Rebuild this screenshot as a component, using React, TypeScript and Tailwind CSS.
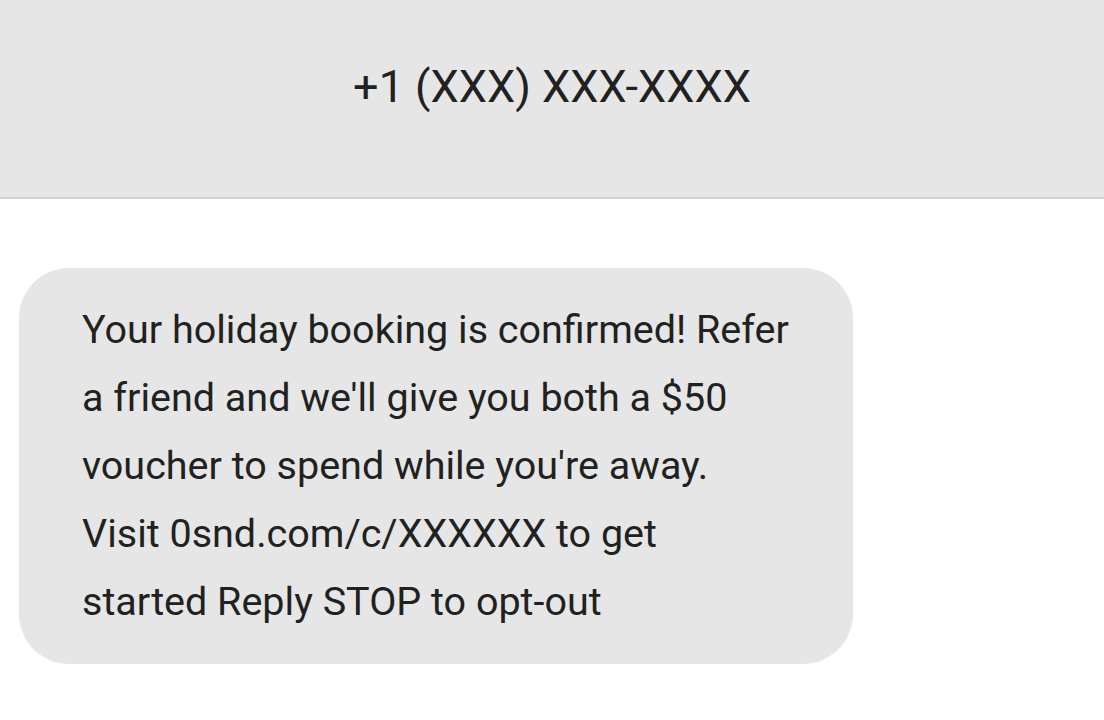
export default function App() {
  const lines = [
    "Your holiday booking is confirmed! Refer",
    "a friend and we'll give you both a $50",
    "voucher to spend while you're away.",
    "Visit 0snd.com/c/XXXXXX to get",
    "started Reply STOP to opt-out",
  ];

  return (
    <div className="w-[1104px] h-[720px] bg-white overflow-hidden font-['Roboto',sans-serif] text-[#202222]">
      {/* Шапка */}
      <div className="h-[199px] bg-[#e6e6e6] border-b-[2px] border-[#d4d4d4] flex justify-center pt-[57px]">
        <p className="text-[45px] leading-[60px]">+1 (XXX) XXX-XXXX</p>
      </div>

      {/* Сообщение */}
      <div className="pt-[69px] pl-[19px]">
        <div className="w-[834px] bg-[#e6e6e6] rounded-[50px] pl-[63px] pt-[28px] pb-[28px]">
          {lines.map((l) => (
            <p key={l} className="text-[39.5px] leading-[68px] whitespace-nowrap">{l}</p>
          ))}
        </div>
      </div>
    </div>
  );
}
